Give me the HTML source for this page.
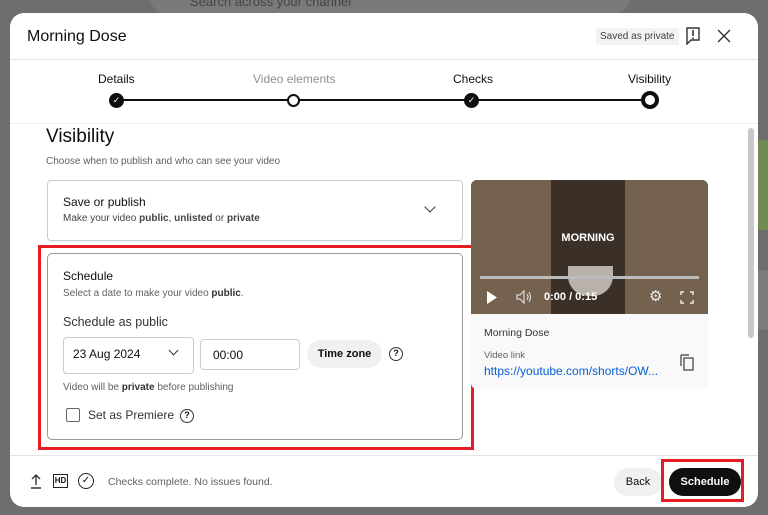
<!DOCTYPE html>
<html><head><style>
*{box-sizing:border-box;margin:0;padding:0}
body{width:768px;height:515px;overflow:hidden;background:#6e6e6e;font-family:"Liberation Sans",sans-serif;position:relative;color:#0f0f0f}
.a{position:absolute}
.dlg{left:10px;top:13px;width:748px;height:494px;background:#fff;border-radius:14px;overflow:hidden}
.t{font-size:12px}
.g{color:#606060}
.circ{width:15px;height:15px;border-radius:50%;background:#0f0f0f;color:#fff;font-size:9px;text-align:center;line-height:15px}
.q{width:14px;height:14px;border:1.5px solid #333;border-radius:50%;font-size:9px;text-align:center;line-height:11px;font-weight:bold}
</style></head><body>
<div class="a" style="left:150px;top:-20px;width:480px;height:34px;background:#7a7a7a;border-radius:17px"></div>
<div class="a" style="left:190px;top:-6px;color:#444;font-size:13px">Search across your channel</div>
<div class="a" style="left:756px;top:140px;width:12px;height:90px;background:#6f8a52"></div>
<div class="a" style="left:756px;top:270px;width:12px;height:60px;background:#7b7b7b"></div>
<div class="a dlg">
 <div class="a" style="left:17px;top:15px;font-size:16px">Morning Dose</div>
 <div class="a" style="left:586px;top:15px;background:#f2f2f2;color:#444;font-size:10px;padding:3px 4px;border-radius:2px">Saved as private</div>
 <svg class="a" style="left:676px;top:14px" width="14" height="18" viewBox="0 0 14 18"><path d="M1 1H13V13H5L1 17Z" fill="none" stroke="#333" stroke-width="1.4"/><path d="M7 3V9M7 10.5V12" stroke="#333" stroke-width="1.6"/></svg>
 <svg class="a" style="left:707px;top:16px" width="14" height="14" viewBox="0 0 14 14"><path d="M1 1L13 13M13 1L1 13" stroke="#333" stroke-width="1.4"/></svg>
 <div class="a" style="left:0;top:46px;width:748px;height:1px;background:#e5e5e5"></div>
 <div class="a t" style="left:88px;top:59px">Details</div>
 <div class="a t" style="left:243px;top:59px;color:#909090">Video elements</div>
 <div class="a t" style="left:443px;top:59px">Checks</div>
 <div class="a t" style="left:618px;top:59px">Visibility</div>
 <div class="a" style="left:107px;top:86px;width:533px;height:2px;background:#0f0f0f"></div>
 <div class="a circ" style="left:99px;top:80px">✓</div>
 <div class="a" style="left:277px;top:81px;width:13px;height:13px;border-radius:50%;border:2.5px solid #0f0f0f;background:#fff"></div>
 <div class="a circ" style="left:454px;top:80px">✓</div>
 <div class="a" style="left:631px;top:78px;width:18px;height:18px;border-radius:50%;border:4px solid #0f0f0f;background:#fff"></div>
 <div class="a" style="left:0;top:110px;width:748px;height:1px;background:#eee"></div>
 <div class="a" style="left:738px;top:115px;width:6px;height:210px;background:#c8c8c8;border-radius:3px"></div>
 <div class="a" style="left:36px;top:113px;font-size:19px">Visibility</div>
 <div class="a g" style="left:36px;top:143px;font-size:10px">Choose when to publish and who can see your video</div>
 <div class="a" style="left:37px;top:167px;width:416px;height:61px;border:1px solid #ccc;border-radius:4px"></div>
 <div class="a t" style="left:53px;top:182px">Save or publish</div>
 <div class="a" style="left:53px;top:200px;font-size:10px;color:#444">Make your video <b>public</b>, <b>unlisted</b> or <b>private</b></div>
 <div class="a" style="left:416px;top:190px;width:8px;height:8px;border-right:1.5px solid #333;border-bottom:1.5px solid #333;transform:rotate(45deg)"></div>
 <div class="a" style="left:28px;top:232px;width:436px;height:205px;border:3px solid #e51c23"></div>
 <div class="a" style="left:37px;top:240px;width:416px;height:187px;border:1px solid #999;border-radius:5px"></div>
 <div class="a t" style="left:53px;top:256px">Schedule</div>
 <div class="a g" style="left:53px;top:275px;font-size:10px">Select a date to make your video <b style="color:#333">public</b>.</div>
 <div class="a t" style="left:53px;top:302px;font-size:12.5px;color:#333">Schedule as public</div>
 <div class="a" style="left:53px;top:324px;width:131px;height:37px;border:1px solid #ccc;border-radius:4px"></div>
 <div class="a t" style="left:63px;top:334px">23 Aug 2024</div>
 <div class="a" style="left:160px;top:334px;width:7px;height:7px;border-right:1.5px solid #333;border-bottom:1.5px solid #333;transform:rotate(45deg)"></div>
 <div class="a" style="left:190px;top:326px;width:100px;height:31px;border:1px solid #ccc;border-radius:4px"></div>
 <div class="a t" style="left:203px;top:335px">00:00</div>
 <div class="a" style="left:297px;top:327px;width:75px;height:28px;background:#f0f0f0;border-radius:14px"></div>
 <div class="a" style="left:297px;top:335px;width:75px;font-size:11px;font-weight:bold;text-align:center">Time zone</div>
 <div class="a q" style="left:379px;top:334px">?</div>
 <div class="a g" style="left:53px;top:369px;font-size:10px">Video will be <b style="color:#333">private</b> before publishing</div>
 <div class="a" style="left:56px;top:395px;width:14px;height:14px;border:1.5px solid #666;border-radius:2px"></div>
 <div class="a t" style="left:78px;top:395px;color:#333">Set as Premiere</div>
 <div class="a q" style="left:170px;top:396px">?</div>
 <div class="a" style="left:461px;top:167px;width:237px;height:134px;background:#6b5a48;border-radius:6px 6px 0 0;overflow:hidden">
  <div class="a" style="left:0;top:0;width:80px;height:134px;background:#74624f"></div>
  <div class="a" style="left:154px;top:0;width:83px;height:134px;background:#74624f"></div>
  <div class="a" style="left:80px;top:0;width:74px;height:134px;background:#3a3028"></div>
  <div class="a" style="left:97px;top:86px;width:45px;height:30px;background:#b8b2aa;border-radius:0 0 20px 20px"></div>
  <div class="a" style="left:80px;top:52px;width:74px;text-align:center;color:#fff;font-weight:bold;font-size:11px">MORNING</div>
  <div class="a" style="left:9px;top:96px;width:219px;height:3px;background:#bbb"></div>
  <svg class="a" style="left:15px;top:111px" width="12" height="13"><path d="M1 0L11 6.5L1 13Z" fill="#fff"/></svg>
  <svg class="a" style="left:45px;top:110px" width="16" height="14"><path d="M1 5H4L8 1V13L4 9H1Z M11 4Q13 7 11 10 M13 2Q16 7 13 12" fill="none" stroke="#ddd" stroke-width="1.2"/></svg>
  <div class="a" style="left:73px;top:111px;color:#fff;font-size:11px;font-weight:bold">0:00 / 0:15</div>
  <div class="a" style="left:178px;top:107px;color:#eee;font-size:15px">⚙</div>
  <svg class="a" style="left:209px;top:111px" width="14" height="13"><path d="M1 4V1H4M10 1H13V4M13 9V12H10M4 12H1V9" fill="none" stroke="#eee" stroke-width="1.4"/></svg>
 </div>
 <div class="a" style="left:461px;top:301px;width:237px;height:75px;background:#f9f9f9;border-radius:0 0 6px 6px"></div>
 <div class="a" style="left:474px;top:314px;font-size:10.5px;color:#333">Morning Dose</div>
 <div class="a g" style="left:474px;top:337px;font-size:9.5px">Video link</div>
 <div class="a" style="left:474px;top:351px;font-size:12px;color:#065fd4">https://youtube.com/shorts/OW...</div>
 <svg class="a" style="left:670px;top:341px" width="14" height="17"><path d="M1 1V12M1 1H9" fill="none" stroke="#555" stroke-width="1.4"/><rect x="4" y="4" width="9" height="12" fill="none" stroke="#555" stroke-width="1.4"/></svg>
 <div class="a" style="left:0;top:442px;width:748px;height:1px;background:#e5e5e5"></div>
 <svg class="a" style="left:20px;top:461px" width="12" height="15"><path d="M6 1V11M2 5L6 1L10 5M1 14H11" fill="none" stroke="#333" stroke-width="1.4"/></svg>
 <div class="a" style="left:43px;top:461px;width:15px;height:14px;border:1.5px solid #222;font-size:8px;font-weight:bold;text-align:center;line-height:11px">HD</div>
 <div class="a" style="left:68px;top:460px;width:16px;height:16px;border:1.5px solid #222;border-radius:50%;font-size:10px;text-align:center;line-height:13px">✓</div>
 <div class="a g" style="left:98px;top:463px;font-size:10.5px">Checks complete. No issues found.</div>
 <div class="a" style="left:604px;top:455px;width:48px;height:28px;background:#f0f0f0;border-radius:14px;font-size:11px;text-align:center;line-height:28px">Back</div>
 <div class="a" style="left:651px;top:446px;width:83px;height:43px;border:3px solid #e51c23"></div>
 <div class="a" style="left:659px;top:455px;width:72px;height:28px;background:#0f0f0f;color:#fff;border-radius:14px;font-size:11px;font-weight:bold;text-align:center;line-height:28px">Schedule</div>
</div>
</body></html>
